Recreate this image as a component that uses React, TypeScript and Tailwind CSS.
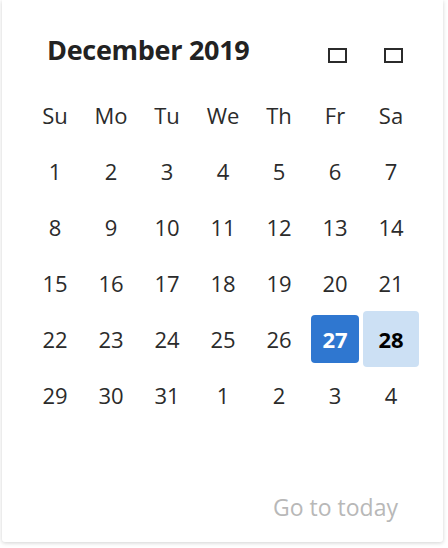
const headers = ['Su', 'Mo', 'Tu', 'We', 'Th', 'Fr', 'Sa'];

const weeks = [
  [1, 2, 3, 4, 5, 6, 7],
  [8, 9, 10, 11, 12, 13, 14],
  [15, 16, 17, 18, 19, 20, 21],
  [22, 23, 24, 25, 26, 27, 28],
  [29, 30, 31, 1, 2, 3, 4],
];

function NavBox() {
  return (
    <button className="w-[56px] h-[40px] flex items-center justify-center">
      <span className="block w-[19px] h-[15px] border-2 border-[#2b2b2b]" />
    </button>
  );
}

export default function App() {
  return (
    <div
      className="w-[448px] h-[548px] bg-white overflow-hidden"
      style={{ fontFamily: '"Open Sans", "Noto Sans", sans-serif' }}
    >
      <div className="ml-[2px] w-[441px] h-[542px] bg-white rounded-b-[3px] shadow-[0_1px_4px_rgba(0,0,0,0.18)] flex flex-col">
        <div className="pt-[30px] pl-[45px] pr-[22px] h-[70px] flex items-center justify-between">
          <h1 className="text-[27px] font-bold text-[#222] tracking-[-0.3px]">December 2019</h1>
          <div className="flex mt-[10px]">
            <NavBox />
            <NavBox />
          </div>
        </div>
        <div className="mt-[17px] pl-[25px] grid grid-cols-[repeat(7,56px)] auto-rows-[56px] text-[22px] text-[#2b2b2b]">
          {headers.map((h) => (
            <div key={h} className="flex items-center justify-center">
              {h}
            </div>
          ))}
          {weeks.flat().map((d, i) => {
            if (d === 27 && i < 28) {
              return (
                <div key={i} className="flex items-center justify-center">
                  <span className="w-[48px] h-[48px] rounded-[4px] bg-[#2f77d0] text-white font-bold flex items-center justify-center">
                    27
                  </span>
                </div>
              );
            }
            if (d === 28 && i < 28) {
              return (
                <div key={i} className="rounded-[4px] bg-[#cce0f4] text-black font-bold flex items-center justify-center">
                  28
                </div>
              );
            }
            return (
              <div key={i} className="flex items-center justify-center">
                {d}
              </div>
            );
          })}
        </div>
        <div className="flex justify-end pr-[45px] mt-[64px] h-[40px] items-center">
          <button className="text-[23px] text-[#b8b8b8]">Go to today</button>
        </div>
      </div>
    </div>
  );
}
